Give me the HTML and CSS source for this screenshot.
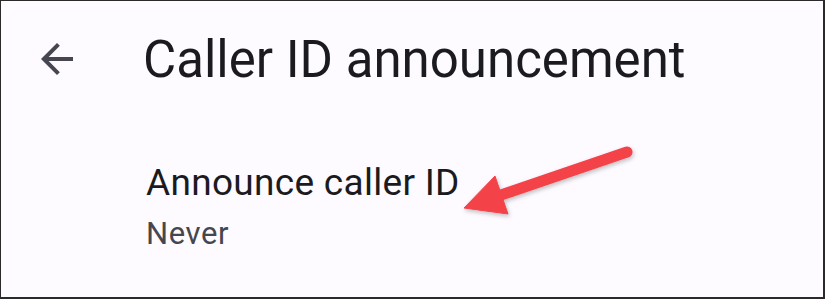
FILE: index.html
```html
<!DOCTYPE html>
<html lang="en">
<head>
  <meta charset="UTF-8" />
  <meta name="viewport" content="width=device-width, initial-scale=1.0" />
  <title>Caller ID announcement</title>
  <link rel="stylesheet" href="styles.css">
</head>
<body>
  <div class="screen">
    <div class="top-bar">
      <svg class="back-icon" viewBox="0 0 24 24" width="48" height="48">
        <path d="M20 11H7.83l5.59-5.59L12 4l-8 8 8 8 1.41-1.41L7.83 13H20v-2z" />
      </svg>
      <h1 class="page-title">Caller ID announcement</h1>
    </div>
    <div class="pref-item">
      <div class="pref-title">Announce caller ID</div>
      <div class="pref-summary">Never</div>
    </div>

    <svg class="callout" width="825" height="299" viewBox="0 0 825 299">
      <defs>
        <filter id="shadow" x="-20%" y="-20%" width="140%" height="160%">
          <feDropShadow dx="1" dy="2" stdDeviation="2" flood-color="#000" flood-opacity="0.25" />
        </filter>
      </defs>
      <g filter="url(#shadow)" fill="#f4434a" stroke="#f4434a">
        <line x1="627" y1="152" x2="498" y2="196" stroke-width="11" stroke-linecap="round" />
        <polygon points="464,208 495,176 508,214" stroke-width="1" stroke-linejoin="round" />
      </g>
    </svg>
  </div>
</body>
</html>
```

FILE: styles.css
```css
html, body {
  margin: 0;
  padding: 0;
}
body {
  font-family: Roboto, "Liberation Sans", sans-serif;
  background: #2a2a2a;
}
.screen {
  position: relative;
  width: 825px;
  height: 299px;
  box-sizing: border-box;
  border-style: solid;
  border-color: #2a2a2a;
  border-width: 1px 2px 2px 1px;
  background: #fdfbff;
  overflow: hidden;
}
.top-bar {
  display: flex;
  align-items: flex-start;
  padding: 29px 0 0 32px;
  height: 60px;
}
.back-icon {
  margin-top: 5px;
  fill: #45464f;
  flex-shrink: 0;
}
.page-title {
  margin: 0 0 0 62px;
  font-size: 51px;
  line-height: 60px;
  font-weight: 400;
  color: #1b1b1f;
  white-space: nowrap;
}
.pref-item {
  padding: 71px 0 0 145px;
}
.pref-title {
  font-size: 37px;
  line-height: 44px;
  letter-spacing: 0.3px;
  color: #1b1b1f;
}
.pref-summary {
  margin-top: 11px;
  font-size: 31px;
  line-height: 36px;
  letter-spacing: 0.6px;
  color: #46464f;
}
.callout {
  position: absolute;
  left: -1px;
  top: -1px;
  pointer-events: none;
}
```
